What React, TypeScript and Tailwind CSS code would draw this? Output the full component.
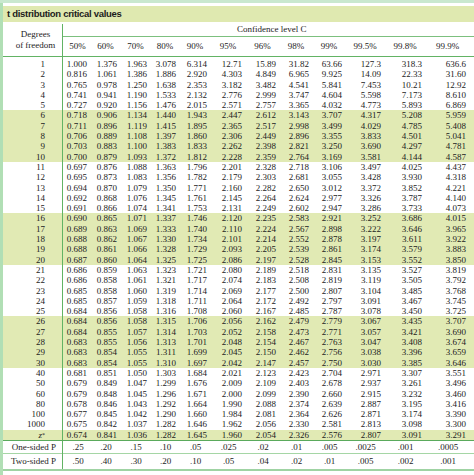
import React from 'react';

// t table, df rows then z*
const ROWS: string[][] = [
    ['1', '1.000', '1.376', '1.963', '3.078', '6.314', '12.71', '15.89', '31.82', '63.66', '127.3', '318.3', '636.6'],
    ['2', '0.816', '1.061', '1.386', '1.886', '2.920', '4.303', '4.849', '6.965', '9.925', '14.09', '22.33', '31.60'],
    ['3', '0.765', '0.978', '1.250', '1.638', '2.353', '3.182', '3.482', '4.541', '5.841', '7.453', '10.21', '12.92'],
    ['4', '0.741', '0.941', '1.190', '1.533', '2.132', '2.776', '2.999', '3.747', '4.604', '5.598', '7.173', '8.610'],
    ['5', '0.727', '0.920', '1.156', '1.476', '2.015', '2.571', '2.757', '3.365', '4.032', '4.773', '5.893', '6.869'],
    ['6', '0.718', '0.906', '1.134', '1.440', '1.943', '2.447', '2.612', '3.143', '3.707', '4.317', '5.208', '5.959'],
    ['7', '0.711', '0.896', '1.119', '1.415', '1.895', '2.365', '2.517', '2.998', '3.499', '4.029', '4.785', '5.408'],
    ['8', '0.706', '0.889', '1.108', '1.397', '1.860', '2.306', '2.449', '2.896', '3.355', '3.833', '4.501', '5.041'],
    ['9', '0.703', '0.883', '1.100', '1.383', '1.833', '2.262', '2.398', '2.821', '3.250', '3.690', '4.297', '4.781'],
    ['10', '0.700', '0.879', '1.093', '1.372', '1.812', '2.228', '2.359', '2.764', '3.169', '3.581', '4.144', '4.587'],
    ['11', '0.697', '0.876', '1.088', '1.363', '1.796', '2.201', '2.328', '2.718', '3.106', '3.497', '4.025', '4.437'],
    ['12', '0.695', '0.873', '1.083', '1.356', '1.782', '2.179', '2.303', '2.681', '3.055', '3.428', '3.930', '4.318'],
    ['13', '0.694', '0.870', '1.079', '1.350', '1.771', '2.160', '2.282', '2.650', '3.012', '3.372', '3.852', '4.221'],
    ['14', '0.692', '0.868', '1.076', '1.345', '1.761', '2.145', '2.264', '2.624', '2.977', '3.326', '3.787', '4.140'],
    ['15', '0.691', '0.866', '1.074', '1.341', '1.753', '2.131', '2.249', '2.602', '2.947', '3.286', '3.733', '4.073'],
    ['16', '0.690', '0.865', '1.071', '1.337', '1.746', '2.120', '2.235', '2.583', '2.921', '3.252', '3.686', '4.015'],
    ['17', '0.689', '0.863', '1.069', '1.333', '1.740', '2.110', '2.224', '2.567', '2.898', '3.222', '3.646', '3.965'],
    ['18', '0.688', '0.862', '1.067', '1.330', '1.734', '2.101', '2.214', '2.552', '2.878', '3.197', '3.611', '3.922'],
    ['19', '0.688', '0.861', '1.066', '1.328', '1.729', '2.093', '2.205', '2.539', '2.861', '3.174', '3.579', '3.883'],
    ['20', '0.687', '0.860', '1.064', '1.325', '1.725', '2.086', '2.197', '2.528', '2.845', '3.153', '3.552', '3.850'],
    ['21', '0.686', '0.859', '1.063', '1.323', '1.721', '2.080', '2.189', '2.518', '2.831', '3.135', '3.527', '3.819'],
    ['22', '0.686', '0.858', '1.061', '1.321', '1.717', '2.074', '2.183', '2.508', '2.819', '3.119', '3.505', '3.792'],
    ['23', '0.685', '0.858', '1.060', '1.319', '1.714', '2.069', '2.177', '2.500', '2.807', '3.104', '3.485', '3.768'],
    ['24', '0.685', '0.857', '1.059', '1.318', '1.711', '2.064', '2.172', '2.492', '2.797', '3.091', '3.467', '3.745'],
    ['25', '0.684', '0.856', '1.058', '1.316', '1.708', '2.060', '2.167', '2.485', '2.787', '3.078', '3.450', '3.725'],
    ['26', '0.684', '0.856', '1.058', '1.315', '1.706', '2.056', '2.162', '2.479', '2.779', '3.067', '3.435', '3.707'],
    ['27', '0.684', '0.855', '1.057', '1.314', '1.703', '2.052', '2.158', '2.473', '2.771', '3.057', '3.421', '3.690'],
    ['28', '0.683', '0.855', '1.056', '1.313', '1.701', '2.048', '2.154', '2.467', '2.763', '3.047', '3.408', '3.674'],
    ['29', '0.683', '0.854', '1.055', '1.311', '1.699', '2.045', '2.150', '2.462', '2.756', '3.038', '3.396', '3.659'],
    ['30', '0.683', '0.854', '1.055', '1.310', '1.697', '2.042', '2.147', '2.457', '2.750', '3.030', '3.385', '3.646'],
    ['40', '0.681', '0.851', '1.050', '1.303', '1.684', '2.021', '2.123', '2.423', '2.704', '2.971', '3.307', '3.551'],
    ['50', '0.679', '0.849', '1.047', '1.299', '1.676', '2.009', '2.109', '2.403', '2.678', '2.937', '3.261', '3.496'],
    ['60', '0.679', '0.848', '1.045', '1.296', '1.671', '2.000', '2.099', '2.390', '2.660', '2.915', '3.232', '3.460'],
    ['80', '0.678', '0.846', '1.043', '1.292', '1.664', '1.990', '2.088', '2.374', '2.639', '2.887', '3.195', '3.416'],
    ['100', '0.677', '0.845', '1.042', '1.290', '1.660', '1.984', '2.081', '2.364', '2.626', '2.871', '3.174', '3.390'],
    ['1000', '0.675', '0.842', '1.037', '1.282', '1.646', '1.962', '2.056', '2.330', '2.581', '2.813', '3.098', '3.300'],
    ['z*', '0.674', '0.841', '1.036', '1.282', '1.645', '1.960', '2.054', '2.326', '2.576', '2.807', '3.091', '3.291'],
];

const LEVELS = ['50%', '60%', '70%', '80%', '90%', '95%', '96%', '98%', '99%', '99.5%', '99.8%', '99.9%'];
const ONE_SIDED = ['.25', '.20', '.15', '.10', '.05', '.025', '.02', '.01', '.005', '.0025', '.001', '.0005'];
const TWO_SIDED = ['.50', '.40', '.30', '.20', '.10', '.05', '.04', '.02', '.01', '.005', '.002', '.001'];

// shaded bands: 6-10, 16-20, 26-30 and z*
const isBand = (i: number) => (i >= 5 && i <= 9) || (i >= 15 && i <= 19) || (i >= 25 && i <= 29) || i === 36;

const GRID = 'grid grid-cols-[60px_26px_30px_30px_29px_31px_35px_34px_33px_33px_39px_41px_44px]';
const LABEL_CELL = 'border-r-[1.5px] border-[#62b364]';

function Label({ value }: { value: string }) {
    if (value === 'z*') {
        return (
            <span>
                <i>z</i>
                <sup className="text-[6px] relative -top-[1px]">*</sup>
            </span>
        );
    }
    return <span>{value}</span>;
}

export default function App() {
    return (
        <div className="w-[474px] h-[475px] bg-white overflow-hidden flex flex-col font-['Liberation_Serif',serif] text-[#1c1c1c]">
            {/* top strip */}
            <div className="h-[3px] bg-[#c9e8cf] shrink-0" />

            <div className="flex flex-1">
                {/* left strip */}
                <div className="w-[3px] bg-[#b1dfb5] shrink-0" />

                <div className="flex-1 flex flex-col">
                    <div className="h-[3px]" />

                    {/* TITLE */}
                    <div className="h-[16px] bg-[#dfe9b0] flex items-center pl-[4px]">
                        <span className="font-['Liberation_Sans',sans-serif] font-bold text-[9.5px] tracking-[-0.3px] text-[#1c1c1c]">
                            t distribution critical values
                        </span>
                    </div>

                    <div className="h-[2px]" />

                    {/* HEADER */}
                    <div className="flex border-b-[1.5px] border-[#62b364]">
                        <div className={`w-[60px] h-[32px] ${LABEL_CELL} flex flex-col items-center justify-center pl-[6px] text-[9px] leading-[11px]`}>
                            <span>Degrees</span>
                            <span>of freedom</span>
                        </div>
                        <div className="flex-1 flex flex-col">
                            <div className="h-[13px] border-b-[1.5px] border-[#7cc07e] flex items-center pl-[174px] text-[9px]">
                                Confidence level C
                            </div>
                            <div className="flex-1 grid grid-cols-[26px_30px_30px_29px_31px_35px_34px_33px_33px_39px_41px_44px] items-center text-[9px]">
                                {LEVELS.map((lv) => (
                                    <span key={lv} className="text-center pl-[3px]">{lv}</span>
                                ))}
                            </div>
                        </div>
                    </div>

                    {/* spacer keeps the vertical rule going */}
                    <div className={GRID}>
                        <div className={`h-[2px] ${LABEL_CELL}`} />
                    </div>

                    {/* DATA ROWS */}
                    {ROWS.map((row, i) => (
                        <div
                            key={row[0]}
                            className={`${GRID} h-[10.3px] items-stretch text-[9px] leading-[10.3px] ${isBand(i) ? 'bg-[#e1eab4]' : ''}`}
                        >
                            <div className={`${LABEL_CELL} text-right pr-[17px]`}>
                                <Label value={row[0]} />
                            </div>
                            {row.slice(1).map((v, j) => (
                                <div key={j} className="text-right pr-[2px]">{v}</div>
                            ))}
                        </div>
                    ))}

                    {/* P VALUES */}
                    <div className="border-t-[1.5px] border-[#5aaa5c]">
                        <div className={`${GRID} h-[12.5px] items-center text-[9px]`}>
                            <div className={`${LABEL_CELL} h-full flex items-center justify-end pr-[6px]`}>One-sided P</div>
                            {ONE_SIDED.map((p, j) => (
                                <span key={j} className="text-center pl-[4px]">{p}</span>
                            ))}
                        </div>
                        <div className={`${GRID} h-[15.5px] items-center text-[9px] border-t border-[#a5d6a5]`}>
                            <div className={`${LABEL_CELL} h-full flex items-center justify-end pr-[6px]`}>Two-sided P</div>
                            {TWO_SIDED.map((p, j) => (
                                <span key={j} className="text-center pl-[4px]">{p}</span>
                            ))}
                        </div>
                    </div>
                    <div className="h-[2px] bg-[#9fd3a3]" />
                </div>
            </div>
        </div>
    );
}
